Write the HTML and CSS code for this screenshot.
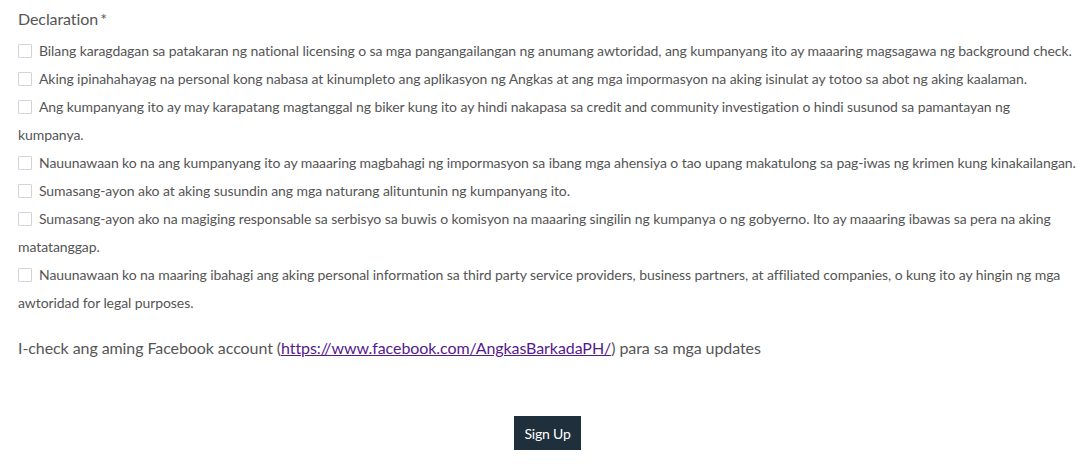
FILE: index.html
```html
<!DOCTYPE html>
<html lang="tl">
<head>
<meta charset="utf-8">
<title>Declaration</title>
<link rel="stylesheet" href="styles.css">
</head>
<body>
<form class="form">
  <div class="title">Declaration<span class="req">*</span></div>
  <div class="checks">
    <label class="check"><span class="box"></span>Bilang karagdagan sa patakaran ng national licensing o sa mga pangangailangan ng anumang awtoridad, ang kumpanyang ito ay maaaring magsagawa ng background check.</label>
    <label class="check"><span class="box"></span>Aking ipinahahayag na personal kong nabasa at kinumpleto ang aplikasyon ng Angkas at ang mga impormasyon na aking isinulat ay totoo sa abot ng aking kaalaman.</label>
    <label class="check"><span class="box"></span>Ang kumpanyang ito ay may karapatang magtanggal ng biker kung ito ay hindi nakapasa sa credit and community investigation o hindi susunod sa pamantayan ng kumpanya.</label>
    <label class="check"><span class="box"></span>Nauunawaan ko na ang kumpanyang ito ay maaaring magbahagi ng impormasyon sa ibang mga ahensiya o tao upang makatulong sa pag-iwas ng krimen kung kinakailangan.</label>
    <label class="check"><span class="box"></span>Sumasang-ayon ako at aking susundin ang mga naturang alituntunin ng kumpanyang ito.</label>
    <label class="check"><span class="box"></span>Sumasang-ayon ako na magiging responsable sa serbisyo sa buwis o komisyon na maaaring singilin ng kumpanya o ng gobyerno. Ito ay maaaring ibawas sa pera na aking matatanggap.</label>
    <label class="check"><span class="box"></span>Nauunawaan ko na maaring ibahagi ang aking personal information sa third party service providers, business partners, at affiliated companies, o kung ito ay hingin ng mga awtoridad for legal purposes.</label>
  </div>
  <p class="fb">I-check ang aming Facebook account (<a class="link" href="#">https://www.facebook.com/AngkasBarkadaPH/</a>) para sa mga updates</p>
  <div class="actions"><button type="button" class="btn">Sign Up</button></div>
</form>
</body>
</html>
```

FILE: styles.css
```css
html, body {
  margin: 0;
  padding: 0;
  background: #ffffff;
}
body {
  font-family: Lato, "Liberation Sans", sans-serif;
  color: #555555;
  font-variant-ligatures: none;
}
.form {
  padding: 9px 13px 0 18px;
}
.title {
  font-size: 16px;
  line-height: 20px;
  margin-bottom: 8px;
  letter-spacing: -0.08px;
}
.req {
  margin-left: 2px;
}
.checks {
  font-size: 14px;
  line-height: 28px;
  letter-spacing: -0.08px;
}
.check {
  display: block;
}
.box {
  display: inline-block;
  width: 12px;
  height: 12px;
  border: 1px solid #cfd4d9;
  border-radius: 1px;
  margin-right: 7px;
  vertical-align: -2px;
  background: #fff;
}
.fb {
  font-size: 16px;
  line-height: 24px;
  letter-spacing: -0.08px;
  margin: 19px 0 0;
}
.link {
  color: #551a8b;
}
.actions {
  display: flex;
  justify-content: center;
  margin-top: 56px;
}
.btn {
  font-family: Lato, "Liberation Sans", sans-serif;
  font-size: 14px;
  letter-spacing: -0.2px;
  color: #ffffff;
  background: #1f2f3c;
  border: none;
  border-radius: 0;
  height: 34px;
  padding: 0 10px;
}
```
